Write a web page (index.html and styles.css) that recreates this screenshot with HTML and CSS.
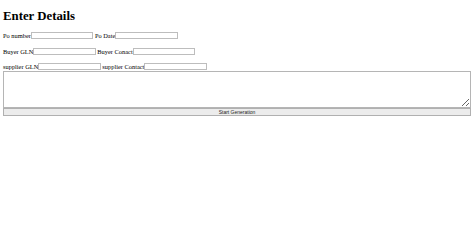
FILE: index.html
```html
<!DOCTYPE html>
<html lang="en">
<head>
<meta charset="utf-8">
<title>Enter Details</title>
<link rel="stylesheet" href="styles.css">
</head>
<body>
<main class="page">
  <h1 class="title">Enter Details</h1>
  <form class="form">
    <div class="row">
      <label class="label">Po number</label><input class="field" type="text">
      <label class="label label-next">Po Date</label><input class="field" type="text">
    </div>
    <div class="row">
      <label class="label">Buyer GLN</label><input class="field" type="text">
      <label class="label label-next">Buyer Conact</label><input class="field" type="text">
    </div>
    <div class="row">
      <label class="label">supplier GLN</label><input class="field" type="text">
      <label class="label label-next">supplier Contact</label><input class="field" type="text">
    </div>
    <textarea class="notes"></textarea>
    <button class="start" type="button">Start Generation</button>
  </form>
</main>
</body>
</html>
```

FILE: styles.css
```css
html, body {
  margin: 0;
  background: #ffffff;
}

.page {
  padding: 0 3px;
  font-family: "Liberation Serif", "Times New Roman", serif;
  color: #000;
}

.title {
  font-size: 12.8px;
  line-height: 14px;
  font-weight: bold;
  margin: 9px 0 8.5px;
}

.form {
  display: flex;
  flex-direction: column;
}

.row {
  display: flex;
  align-items: center;
  height: 8px;
  margin-bottom: 7.5px;
  font-size: 6.4px;
}

.row:nth-child(3) {
  margin-bottom: 0;
}

.label {
  white-space: nowrap;
}

.label-next {
  margin-left: 1.5px;
}

.field {
  box-sizing: border-box;
  width: 62.5px;
  height: 7px;
  margin: 0;
  padding: 0;
  border: 1px solid #bdbdbd;
  background: #fff;
  font-size: 5px;
}

.notes {
  box-sizing: border-box;
  display: block;
  width: 100%;
  height: 37px;
  margin: 0;
  padding: 0;
  border: 1px solid #b5b5b5;
  resize: vertical;
}

.start {
  box-sizing: border-box;
  display: block;
  width: 100%;
  height: 8.5px;
  margin: 0;
  padding: 0;
  border: 1px solid #b0b0b0;
  background: #ececec;
  font-family: "Liberation Sans", Arial, sans-serif;
  font-size: 5px;
  line-height: 6px;
  color: #222;
}
```
